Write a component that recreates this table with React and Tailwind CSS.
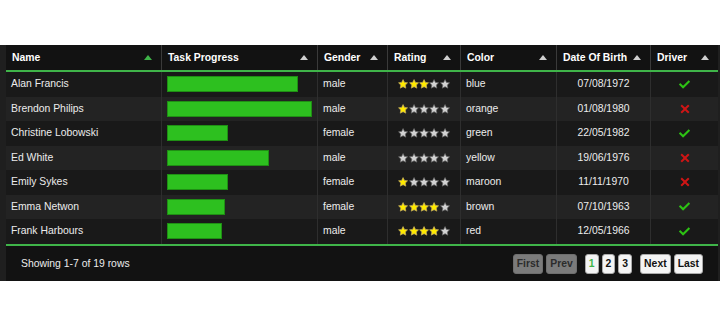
import React from "react";

const columns = [
  { key: "name", title: "Name", width: 156 },
  { key: "progress", title: "Task Progress", width: 156 },
  { key: "gender", title: "Gender", width: 70 },
  { key: "rating", title: "Rating", width: 73 },
  { key: "col", title: "Color", width: 96 },
  { key: "dob", title: "Date Of Birth", width: 94 },
  { key: "driver", title: "Driver", width: 67 },
];

const rows = [
  { name: "Alan Francis", progress: 90, gender: "male", rating: 3, col: "blue", dob: "07/08/1972", driver: true },
  { name: "Brendon Philips", progress: 100, gender: "male", rating: 1, col: "orange", dob: "01/08/1980", driver: false },
  { name: "Christine Lobowski", progress: 42, gender: "female", rating: 0, col: "green", dob: "22/05/1982", driver: true },
  { name: "Ed White", progress: 70, gender: "male", rating: 0, col: "yellow", dob: "19/06/1976", driver: false },
  { name: "Emily Sykes", progress: 42, gender: "female", rating: 1, col: "maroon", dob: "11/11/1970", driver: false },
  { name: "Emma Netwon", progress: 40, gender: "female", rating: 4, col: "brown", dob: "07/10/1963", driver: true },
  { name: "Frank Harbours", progress: 38, gender: "male", rating: 4, col: "red", dob: "12/05/1966", driver: true },
];

function Star({ on }) {
  return (
    <svg viewBox="0 0 512 512" className="w-[10px] h-[10px]">
      <polygon
        fill={on ? "#FFEA00" : "#D2D2D2"}
        stroke={on ? "#C1AB60" : "#686868"}
        strokeWidth="37.6"
        strokeLinejoin="round"
        points="259.216,29.942 330.27,173.919 489.16,197.007 374.185,309.08 401.33,467.31 259.216,392.612 117.104,467.31 144.25,309.08 29.274,197.007 188.165,173.919"
      />
    </svg>
  );
}

function Tick() {
  return (
    <svg viewBox="0 0 24 24" className="w-[11px] h-[11px]">
      <path
        fill="#2DC214"
        d="M21.652,3.211c-0.293-0.295-0.77-0.295-1.061,0L9.41,14.34c-0.293,0.297-0.771,0.297-1.062,0L3.449,9.351C3.304,9.203,3.114,9.13,2.923,9.129C2.73,9.128,2.534,9.201,2.387,9.351l-2.165,1.946C0.078,11.445,0,11.63,0,11.823c0,0.194,0.078,0.397,0.223,0.544l4.94,5.184c0.292,0.296,0.771,0.776,1.062,1.07l2.124,2.141c0.292,0.293,0.769,0.293,1.062,0l14.366-14.34c0.293-0.294,0.293-0.777,0-1.071L21.652,3.211z"
      />
    </svg>
  );
}

function Cross() {
  return (
    <svg viewBox="0 0 24 24" className="w-[10px] h-[10px]">
      <path
        fill="#CE1515"
        d="M22.245,4.015c0.313,0.313,0.313,0.826,0,1.139l-6.276,6.27c-0.313,0.312-0.313,0.826,0,1.14l6.273,6.272c0.313,0.313,0.313,0.826,0,1.14l-2.285,2.277c-0.314,0.312-0.828,0.312-1.142,0l-6.271-6.271c-0.313-0.313-0.828-0.313-1.141,0l-6.276,6.267c-0.313,0.313-0.828,0.313-1.141,0l-2.282-2.28c-0.313-0.313-0.313-0.826,0-1.14l6.278-6.269c0.313-0.313,0.313-0.826,0-1.14L1.709,5.147c-0.314-0.313-0.314-0.827,0-1.14l2.284-2.278C4.308,1.417,4.821,1.417,5.135,1.73L11.405,8c0.314,0.314,0.828,0.314,1.141,0.001l6.276-6.267c0.312-0.312,0.826-0.312,1.141,0L22.245,4.015z"
      />
    </svg>
  );
}

function Cell({ col, row }) {
  const base = "h-full flex items-center border-r border-[#2e2e2e] last:border-r-0 shrink-0";
  const style = { width: col.width };
  if (col.key === "progress") {
    return (
      <div className={`${base} px-[5px]`} style={style}>
        <div
          className="h-[16px] bg-[#2dc01f] border border-[#1f8f14]"
          style={{ width: `${row.progress}%` }}
        />
      </div>
    );
  }
  if (col.key === "rating") {
    return (
      <div className={`${base} justify-center gap-[0.3px]`} style={style}>
        {[1, 2, 3, 4, 5].map((n) => (
          <Star key={n} on={n <= row.rating} />
        ))}
      </div>
    );
  }
  if (col.key === "driver") {
    return (
      <div className={`${base} justify-center`} style={style}>
        {row.driver ? <Tick /> : <Cross />}
      </div>
    );
  }
  if (col.key === "dob") {
    return (
      <div className={`${base} justify-center`} style={style}>
        {row.dob}
      </div>
    );
  }
  return (
    <div className={`${base} pl-[5px]`} style={style}>
      {row[col.key]}
    </div>
  );
}

function PageButton({ children, disabled, active }) {
  let cls = "bg-[#f4f4f4] border-[#aaaaaa] text-[#111]";
  if (disabled) cls = "bg-[#7b7b7b] border-[#6e6e6e] text-[#2c2c2c]";
  if (active) cls = "bg-[#f4f4f4] border-[#aaaaaa] text-[#3fb449]";
  return (
    <button
      className={`h-[20px] px-[3px] rounded-[3px] border font-bold leading-none ${cls}`}
    >
      {children}
    </button>
  );
}

export default function App() {
  return (
    <div
      className="min-h-screen bg-white pt-[45px] text-[10.4px] text-[#ececec]"
      style={{ fontFamily: '"Liberation Sans", Arial, sans-serif' }}
    >
      <div className="bg-[#1f1f1f] pl-[6px] pr-[2px]">
        <div className="w-[712px] bg-[#121212]">
          {/* header */}
          <div className="flex h-[25px] bg-[#121212] font-bold text-white">
            {columns.map((c, i) => (
              <div
                key={c.key}
                className="h-full flex items-center justify-between pl-[6px] pr-[9px] border-r border-[#3a3a3a] last:border-r-0 shrink-0"
                style={{ width: c.width }}
              >
                <span>{c.title}</span>
                <span
                  className={`w-0 h-0 border-l-[4px] border-r-[4px] border-b-[5px] border-l-transparent border-r-transparent ${
                    i === 0 ? "border-b-[#3fb449]" : "border-b-[#cfcfcf]"
                  }`}
                />
              </div>
            ))}
          </div>
          <div className="h-[2px] bg-[#3fb449]" />

          {/* rows */}
          {rows.map((r, i) => (
            <div
              key={r.name}
              className={`flex h-[24.5px] ${i % 2 ? "bg-[#232323]" : "bg-[#191919]"}`}
            >
              {columns.map((c) => (
                <Cell key={c.key} col={c} row={r} />
              ))}
            </div>
          ))}
          <div className="h-[2px] bg-[#3fb449]" />

          {/* footer */}
          <div className="h-[35px] flex items-center justify-between pl-[15px] pr-[15px] pt-[2px]">
            <span>Showing 1-7 of 19 rows</span>
            <div className="flex items-center gap-[3px]">
              <PageButton disabled>First</PageButton>
              <PageButton disabled>Prev</PageButton>
              <div className="flex gap-[3px] mx-[5px]">
                <PageButton active>1</PageButton>
                <PageButton>2</PageButton>
                <PageButton>3</PageButton>
              </div>
              <PageButton>Next</PageButton>
              <PageButton>Last</PageButton>
            </div>
          </div>
        </div>
      </div>
    </div>
  );
}
